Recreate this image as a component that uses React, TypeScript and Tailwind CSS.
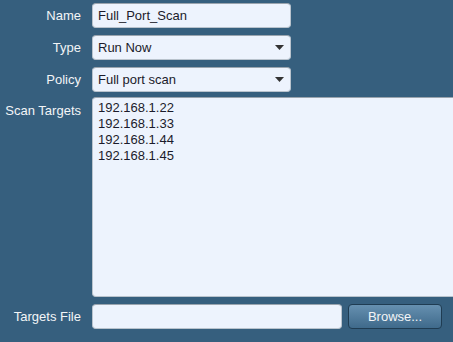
export default function App() {
  const label = "w-[92px] shrink-0 pr-[11px] text-right text-[13px] text-[#f3f5f7]";
  const field =
    "h-[25px] rounded-[4px] border border-[#b9c3cd] border-t-[#9aa4ae] bg-[#edf3fd] px-[5px] text-[13px] text-[#1b1b2b]";
  const caret = (
    <svg width="9" height="5" viewBox="0 0 9 5" className="ml-auto mr-[1px]">
      <path d="M0 0h9L4.5 5z" fill="#333" />
    </svg>
  );

  return (
    <div
      className="flex h-[342px] w-[453px] flex-col gap-[7px] overflow-hidden bg-[#365f7e] pt-[3px]"
      style={{ fontFamily: '"Liberation Sans", Arial, sans-serif' }}
    >
      <div className="flex items-center">
        <div className={label}>Name</div>
        <div className={`${field} flex w-[199px] items-center`}>Full_Port_Scan</div>
      </div>
      <div className="flex items-center">
        <div className={label}>Type</div>
        <div className={`${field} flex w-[199px] items-center`}>
          <span>Run Now</span>
          {caret}
        </div>
      </div>
      <div className="flex items-center">
        <div className={label}>Policy</div>
        <div className={`${field} flex w-[199px] items-center`}>
          <span>Full port scan</span>
          {caret}
        </div>
      </div>
      <div className="mt-[-2px] flex items-start">
        <div className={`${label} pt-[4px]`}>Scan Targets</div>
        <div className="h-[200px] w-[370px] shrink-0 rounded-[4px] border border-[#b9c3cd] border-t-[#9aa4ae] bg-[#edf3fd] px-[5px] pt-[2px] text-[13px] leading-[16px] text-[#1b1b2b]">
          <div>192.168.1.22</div>
          <div>192.168.1.33</div>
          <div>192.168.1.44</div>
          <div>192.168.1.45</div>
        </div>
      </div>
      <div className="flex items-center">
        <div className={label}>Targets File</div>
        <div className={`${field} w-[250px]`} />
        <button
          type="button"
          className="ml-[6px] h-[25px] w-[94px] rounded-[4px] border border-[#1f3c52] bg-gradient-to-b from-[#6690b0] to-[#3f6a8b] text-[13px] text-[#f3f5f7]"
        >
          Browse...
        </button>
      </div>
    </div>
  );
}
